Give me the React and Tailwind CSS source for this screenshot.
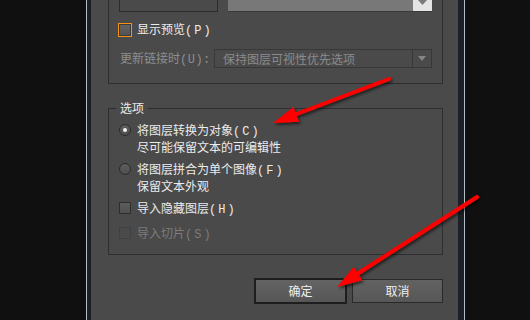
import React from "react";

const FONT = { fontFamily: '"Noto Sans CJK SC", "Noto Sans", sans-serif' };

function L({ children, t = "tracking-[2px]" }) {
  return (
    <span className={"text-[12px] " + t} style={{ fontFamily: '"Liberation Mono", "Noto Sans CJK SC", monospace' }}>
      {children}
    </span>
  );
}

function Radio({ checked }) {
  return (
    <div className="w-[12px] h-[12px] rounded-full border border-[#2a2a2a] bg-gradient-to-b from-[#5e5e5e] to-[#4e4e4e] flex items-center justify-center shrink-0">
      {checked && <div className="w-[4px] h-[4px] rounded-full bg-[#f2f2f2]" />}
    </div>
  );
}

function Check({ disabled }) {
  return (
    <div
      className={
        "w-[12px] h-[12px] border shrink-0 " +
        (disabled
          ? "border-[#404040] bg-[#4a4a4a]"
          : "border-[#2e2e2e] bg-gradient-to-b from-[#5c5c5c] to-[#505050]")
      }
    />
  );
}

function Line({ children, className = "" }) {
  return (
    <div className={"h-[17px] leading-[17px] text-[12px] whitespace-nowrap " + className}>{children}</div>
  );
}

export default function App() {
  return (
    <div className="w-[530px] h-[320px] bg-[#101010] flex relative overflow-hidden" style={FONT}>
      <div className="w-[86px] shrink-0" />
      <div className="w-px shrink-0 bg-[#b5bdc5]" />
      <div className="w-[4px] shrink-0 bg-[#1b2027]" />
      <div className="w-[367px] shrink-0 bg-[#4a4a4a] pl-[17px] pr-[15px] flex flex-col">
        {/* top group */}
        <div className="-mt-[20px] h-[104px] border border-[#2e2e2e] flex flex-col pl-[9px] pr-[10px] shrink-0">
          <div className="h-[31px] flex items-end shrink-0">
            <div className="ml-[1px] w-[99px] h-full border border-[#2c2c2c]" />
            <div className="ml-[10px] w-[185px] h-full bg-[#787878] border-b border-[#3a3a3a]" />
            <div className="w-[19px] h-full bg-[#e4e4e4] border-b border-[#3a3a3a] flex justify-center">
              <svg width="9" height="6" viewBox="0 0 9 6" className="mt-[19px]">
                <path d="M0 0 H9 L4.5 5 Z" fill="#7a7a7a" />
              </svg>
            </div>
          </div>
          <div className="mt-[11px] h-[14px] flex items-center shrink-0">
            <div className="w-[14px] h-[14px] border border-[#f39419] p-0 shrink-0">
              <div className="w-full h-full border border-[#3a3a3a] bg-gradient-to-b from-[#626262] to-[#545454]" />
            </div>
            <span className="ml-[5px] text-[12px] leading-[14px] text-[#ececec] whitespace-nowrap">
              显示预览<L>(P)</L>
            </span>
          </div>
          <div className="mt-[12px] h-[19px] flex items-center justify-between shrink-0">
            <span className="ml-[2px] text-[12px] text-[#8e8e8e] whitespace-nowrap">
              更新链接时<L t="tracking-[0.5px]">(U):</L>
            </span>
            <div className="w-[218px] h-[19px] border border-[#383838] flex items-center shrink-0">
              <span className="flex-1 pl-[8px] text-[12px] leading-[17px] text-[#8a8a8a]">保持图层可视性优先选项</span>
              <div className="w-[19px] h-full border-l border-[#383838] flex items-center justify-center">
                <svg width="8" height="5" viewBox="0 0 8 5">
                  <path d="M0 0 H8 L4 5 Z" fill="#868686" />
                </svg>
              </div>
            </div>
          </div>
        </div>

        {/* options group */}
        <div className="mt-[24px] h-[147px] border border-[#2e2e2e] relative pl-[10px] pt-[12px] flex flex-col shrink-0">
          <span className="absolute -top-[9px] left-[7px] px-[4px] bg-[#4a4a4a] text-[12px] leading-[16px] text-[#ececec]">
            选项
          </span>
          <div className="flex items-center">
            <Radio checked />
            <Line className="ml-[6px] text-[#ececec]">将图层转换为对象<L>(C)</L></Line>
          </div>
          <Line className="ml-[18px] text-[#ececec]">尽可能保留文本的可编辑性</Line>
          <div className="mt-[5px] flex items-center">
            <Radio />
            <Line className="ml-[6px] text-[#ececec]">将图层拼合为单个图像<L>(F)</L></Line>
          </div>
          <Line className="ml-[18px] text-[#ececec]">保留文本外观</Line>
          <div className="mt-[5px] flex items-center">
            <Check />
            <Line className="ml-[6px] text-[#ececec]">导入隐藏图层<L>(H)</L></Line>
          </div>
          <div className="mt-[8px] flex items-center">
            <Check disabled />
            <Line className="ml-[6px] text-[#7c7c7c]">导入切片<L>(S)</L></Line>
          </div>
        </div>

        {/* buttons */}
        <div className="mt-[23px] flex justify-end items-center gap-[5px]">
          <button className="w-[93px] h-[26px] border-2 border-[#1e1e1e] bg-gradient-to-b from-[#646464] to-[#565656] text-[12px] text-[#f0f0f0]">
            确定
          </button>
          <button className="w-[91px] h-[24px] border border-[#2a2a2a] bg-gradient-to-b from-[#626262] to-[#575757] text-[12px] text-[#f0f0f0]">
            取消
          </button>
        </div>
      </div>
      <div className="w-[6px] shrink-0 bg-[#1b2027]" />
      <div className="w-px shrink-0 bg-[#b5bdc5]" />
      <div className="flex-1" />

      {/* annotation arrows */}
      <svg className="absolute inset-0 pointer-events-none" width="530" height="320" viewBox="0 0 530 320">
        <defs>
          <filter id="sh" x="-20%" y="-20%" width="140%" height="140%">
            <feDropShadow dx="1.5" dy="2" stdDeviation="1.5" floodColor="#000" floodOpacity="0.6" />
          </filter>
        </defs>
        <g filter="url(#sh)" fill="#ff0000" stroke="#ff0000">
          <line x1="389" y1="79" x2="294" y2="115" strokeWidth="4" strokeLinecap="round" />
          <path d="M273 123 L293.6 106.7 L296 114.5 L299.2 121.7 Z" stroke="none" />
          <line x1="477" y1="197" x2="357" y2="274" strokeWidth="4" strokeLinecap="round" />
          <path d="M337 287 L353.7 266.8 L358 273.5 L362.3 280.2 Z" stroke="none" />
        </g>
      </svg>
    </div>
  );
}
